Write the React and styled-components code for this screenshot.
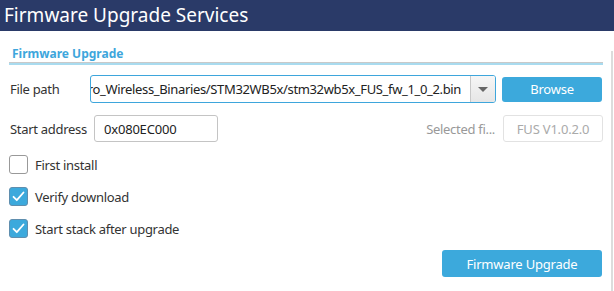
import React from 'react'
import styled, { createGlobalStyle } from 'styled-components'

const GlobalStyle = createGlobalStyle`
  body {
    margin: 0;
    background: #fff;
    font-family: "Noto Sans", "Open Sans", sans-serif;
  }
`;

const Page = styled.div`
  width: 614px;
  height: 291px;
  overflow: hidden;
  background: #fff;
`;

const Header = styled.div`
  height: 31px;
  background: #2a3a68;
  color: #fff;
  font-size: 19px;
  line-height: 31px;
  padding-left: 4px;
  white-space: nowrap;
`;

const Body = styled.div`
  display: flex;
`;

const Panel = styled.div`
  width: 594px;
  margin-left: 9px;
  padding-top: 15px;
`;

const Rail = styled.div`
  width: 2px;
  margin-left: 8px;
  margin-top: 20px;
  height: 240px;
  background: #dcdcdc;
`;

const Legend = styled.div`
  font-size: 12px;
  font-weight: bold;
  color: #3ea6dc;
  padding-left: 3px;
  line-height: 15px;
`;

const Rule = styled.div`
  margin-top: 1px;
  border-top: 1px solid #c9c9c9;
  border-bottom: 2px solid #a9dbef;
`;

const Row = styled.div`
  display: flex;
  align-items: center;
  height: ${p => p.$h || 27}px;
  margin-top: ${p => p.$top || 0}px;
`;

const Label = styled.div`
  font-size: 13px;
  letter-spacing: -0.3px;
  color: #333;
  width: ${p => p.$width}px;
  padding-left: 1px;
  box-sizing: border-box;
  white-space: nowrap;
`;

const Combo = styled.div`
  display: flex;
  width: 406px;
  height: 100%;
  box-sizing: border-box;
  border: 1px solid #3ea6dc;
  border-radius: 3px;
  overflow: hidden;
`;

const ComboText = styled.div`
  flex: 1;
  display: flex;
  justify-content: flex-end;
  align-items: center;
  overflow: hidden;
  white-space: nowrap;
  font-size: 13px;
  letter-spacing: -0.35px;
  color: #222;
  padding-right: 9px;
`;

const ComboArrow = styled.div`
  width: 24px;
  border-left: 1px solid #c8c8c8;
  background: linear-gradient(#f6f6f6, #e6e6e6);
  display: flex;
  align-items: center;
  justify-content: center;
  &::after {
    content: '';
    border-left: 5px solid transparent;
    border-right: 5px solid transparent;
    border-top: 5px solid #666;
  }
`;

const Button = styled.div`
  width: ${p => p.$width || 100}px;
  height: ${p => p.$h || 25}px;
  margin-left: ${p => p.$left || 0}px;
  background: #3ca9dc;
  border-radius: 3px;
  color: #fff;
  font-size: 13px;
  letter-spacing: -0.2px;
  display: flex;
  align-items: center;
  justify-content: center;
`;

const Field = styled.div`
  width: ${p => p.$width}px;
  height: 100%;
  box-sizing: border-box;
  border: 1px solid ${p => (p.$dim ? '#e2e2e2' : '#c4c4c4')};
  border-radius: 3px;
  font-size: 13px;
  letter-spacing: -0.2px;
  color: ${p => (p.$dim ? '#aaa' : '#222')};
  display: flex;
  align-items: center;
  justify-content: ${p => (p.$center ? 'center' : 'flex-start')};
  padding-left: ${p => (p.$center ? 0 : 9)}px;
`;

const Hint = styled.div`
  margin-left: auto;
  margin-right: 8px;
  font-size: 13px;
  letter-spacing: -0.3px;
  color: #999;
`;

const CheckRow = styled.label`
  display: flex;
  align-items: center;
  height: 19px;
  margin-top: ${p => p.$top}px;
  font-size: 13px;
  letter-spacing: -0.3px;
  color: #333;
`;

const Box = styled.span`
  width: 19px;
  height: 19px;
  box-sizing: border-box;
  border-radius: 3px;
  border: 1px solid ${p => (p.$on ? '#5f8eae' : '#999')};
  background: ${p => (p.$on ? '#3ca9dc' : '#fff')};
  display: flex;
  align-items: center;
  justify-content: center;
  margin-right: 7px;
`;

const Footer = styled.div`
  display: flex;
  justify-content: flex-end;
  margin-top: 12px;
  padding-right: 1px;
`;

const Check = ({ on, top, children }) => (
  <CheckRow $top={top}>
    <Box $on={on}>
      {on && (
        <svg width="13" height="11" viewBox="0 0 13 11">
          <path d="M1.5 5.8 L4.8 9.2 L11.5 1.5" fill="none" stroke="#fff" strokeWidth="1.8" strokeLinecap="round" strokeLinejoin="round" />
        </svg>
      )}
    </Box>
    {children}
  </CheckRow>
);

export default function App() {
  return (
    <Page>
      <GlobalStyle />
      <Header>Firmware Upgrade Services</Header>
      <Body>
        <Panel>
          <Legend>Firmware Upgrade</Legend>
          <Rule />
          <Row $h={28} $top={10}>
            <Label $width={81}>File path</Label>
            <Combo>
              <ComboText>ro_Wireless_Binaries/STM32WB5x/stm32wb5x_FUS_fw_1_0_2.bin</ComboText>
              <ComboArrow />
            </Combo>
            <Button $left={6}>Browse</Button>
          </Row>
          <Row $top={12}>
            <Label $width={85}>Start address</Label>
            <Field $width={124}>0x080EC000</Field>
            <Hint>Selected fi...</Hint>
            <Field $width={100} $dim $center>FUS V1.0.2.0</Field>
          </Row>
          <Check top={13}>First install</Check>
          <Check on top={13}>Verify download</Check>
          <Check on top={13}>Start stack after upgrade</Check>
          <Footer>
            <Button $width={160} $h={27}>Firmware Upgrade</Button>
          </Footer>
        </Panel>
        <Rail />
      </Body>
    </Page>
  )
}
